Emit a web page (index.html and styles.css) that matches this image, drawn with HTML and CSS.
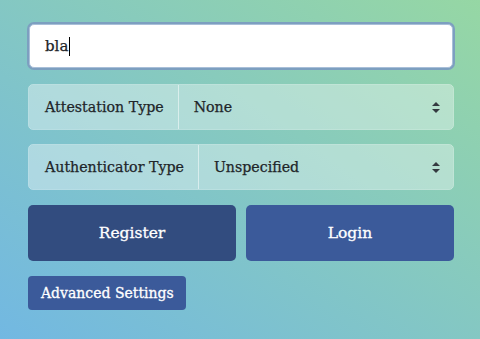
FILE: index.html
```html
<!DOCTYPE html>
<html lang="en">
<head>
    <meta charset="UTF-8">
    <title>WebAuthn Demo</title>
    <link rel="stylesheet" href="styles.css">
</head>
<body>
    <div class="panel">
        <div class="text-input"><span>bla</span><span class="caret"></span></div>

        <div class="input-group">
            <div class="group-label">Attestation Type</div>
            <div class="group-select">
                <span>None</span>
                <svg class="arrows" width="8" height="11" viewBox="0 0 8 11"><path d="M4 0L8 4H0z M4 11L0 7H8z" fill="#343a40"/></svg>
            </div>
        </div>

        <div class="input-group">
            <div class="group-label">Authenticator Type</div>
            <div class="group-select">
                <span>Unspecified</span>
                <svg class="arrows" width="8" height="11" viewBox="0 0 8 11"><path d="M4 0L8 4H0z M4 11L0 7H8z" fill="#343a40"/></svg>
            </div>
        </div>

        <div class="actions">
            <button class="btn btn-register">Register</button>
            <button class="btn btn-login">Login</button>
        </div>

        <button class="btn btn-small">Advanced Settings</button>
    </div>
</body>
</html>
```

FILE: styles.css
```css
html, body {
    height: 100%;
}

body {
    margin: 0;
    font-family: 'DejaVu Serif', serif;
    color: #212529;
    background: linear-gradient(to top right, #72b8e2, #96d7a4);
    -webkit-text-stroke: 0.25px;
}

.panel {
    width: 425px;
    padding: 24px 0 0 29px;
}

.text-input {
    width: 424px;
    height: 44px;
    background: #fff;
    border: 1px solid #a9bfd8;
    border-radius: 5px;
    box-shadow: 0 0 0 2px #7d9fc0;
    display: flex;
    align-items: center;
    padding-left: 15px;
    box-sizing: border-box;
    font-size: 15px;
}

.caret {
    width: 1px;
    height: 19px;
    background: #000;
    margin-left: 1px;
}

.input-group {
    display: flex;
    margin-top: 16px;
    margin-left: -1px;
    height: 46px;
    border: 1px solid rgba(255, 255, 255, 0.45);
    border-radius: 5px;
    box-sizing: border-box;
    font-size: 14.2px;
    overflow: hidden;
}

.input-group + .input-group {
    margin-top: 14px;
}

.group-label {
    display: flex;
    align-items: center;
    padding: 0 14px 0 16px;
    background: rgba(255, 255, 255, 0.38);
    border-right: 1px solid rgba(255, 255, 255, 0.5);
}

.group-select {
    flex: 1;
    display: flex;
    align-items: center;
    justify-content: space-between;
    padding: 0 13px 0 15px;
    background: rgba(255, 255, 255, 0.36);
}

.actions {
    display: flex;
    gap: 10px;
    margin-top: 15px;
    margin-left: -1px;
}

.btn {
    border: none;
    color: #fff;
    font-family: 'DejaVu Serif', serif;
    border-radius: 5px;
    cursor: pointer;
    -webkit-text-stroke: 0.3px #fff;
}

.actions .btn {
    flex: 1;
    height: 56px;
    font-size: 15.5px;
}

.btn-register {
    background: #324c7f;
}

.btn-login {
    background: #3b5a9a;
}

.btn-small {
    margin-top: 15px;
    margin-left: -1px;
    height: 34px;
    padding: 0 12px 0 13px;
    font-size: 14px;
    background: #3b5a9a;
    border-radius: 4px;
}
```
